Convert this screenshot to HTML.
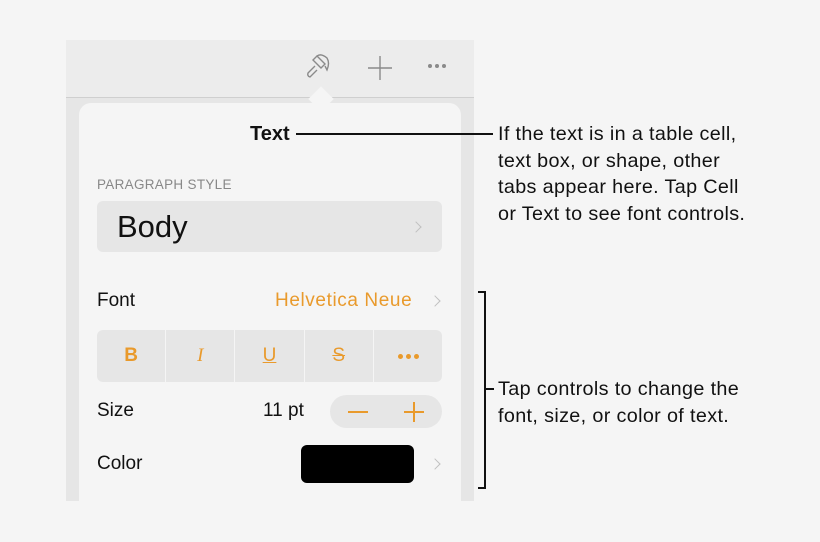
<!DOCTYPE html>
<html><head><style>
body{margin:0;width:820px;height:542px;background:#f5f5f5;font-family:"Liberation Sans",sans-serif;position:relative;overflow:hidden}
.a{position:absolute}
.t{font-size:19.8px;letter-spacing:0.35px;color:#111;line-height:26.5px}
.r{font-size:19px;color:#111}
.chev{position:absolute;width:7px;height:7px;border-right:1.5px solid #c0c0c0;border-top:1.5px solid #c0c0c0;transform:rotate(45deg)}
</style></head><body>
<div class="a" style="left:66px;top:40px;width:408px;height:461px;background:#e6e6e6"></div>
<div class="a" style="left:66px;top:40px;width:408px;height:57px;background:#ececec;border-bottom:1px solid #cfcfcf"></div>
<svg class="a" style="left:305px;top:52px" width="30" height="28" viewBox="0 0 30 28" fill="none" stroke="#8a8a8a" stroke-width="1.4"><path d="M12 4 L20 12 L16 16 L8 8 Z"/><path d="M12 4 Q16 1 22 6 Q25 11 22 18 L20 14"/><path d="M10 14 L3 21 Q2 24 5 25 L12 18"/></svg>
<svg class="a" style="left:366px;top:54px" width="28" height="28" stroke="#8a8a8a" stroke-width="1.4"><path d="M14 2V26M2 14H26"/></svg>
<div class="a" style="left:428px;top:64px;width:4px;height:4px;border-radius:2px;background:#8a8a8a;box-shadow:7px 0 #8a8a8a,14px 0 #8a8a8a"></div>
<div class="a" style="left:79px;top:103px;width:382px;height:398px;background:#f5f5f5;border-radius:12px 12px 0 0"></div>
<div class="a" style="left:312px;top:90px;width:18px;height:18px;background:#f5f5f5;transform:rotate(45deg)"></div>
<div class="a" style="left:250px;top:123px;font-size:20px;font-weight:bold;color:#111">Text</div>
<div class="a" style="left:296px;top:133px;width:197px;height:2px;background:#111"></div>
<div class="a t" style="left:498px;top:121px">If the text is in a table cell,<br>text box, or shape, other<br>tabs appear here. Tap Cell<br>or Text to see font controls.</div>
<div class="a" style="left:97px;top:177px;font-size:13.5px;color:#888;letter-spacing:0.3px">PARAGRAPH STYLE</div>
<div class="a" style="left:97px;top:201px;width:345px;height:51px;background:#e6e6e6;border-radius:6px"></div>
<div class="a" style="left:117px;top:209px;font-size:31px;color:#111">Body</div>
<div class="chev" style="left:412px;top:223px"></div>
<div class="a r" style="left:97px;top:290px">Font</div>
<div class="a r" style="left:275px;top:290px;color:#e99a2c;letter-spacing:0.6px">Helvetica Neue</div>
<div class="chev" style="left:431px;top:297px"></div>
<div class="a" style="left:97px;top:330px;width:345px;height:52px;background:#e6e6e6;border-radius:6px;display:flex;color:#e99a2c;font-size:19px">
<div style="flex:1;text-align:center;line-height:52px;font-weight:bold;border-right:1px solid #f5f5f5">B</div>
<div style="flex:1;text-align:center;line-height:52px;font-style:italic;font-family:'Liberation Serif',serif;border-right:1px solid #f5f5f5">I</div>
<div style="flex:1;text-align:center;line-height:52px;border-right:1px solid #f5f5f5;text-decoration:underline">U</div>
<div style="flex:1;text-align:center;line-height:52px;border-right:1px solid #f5f5f5;text-decoration:line-through">S</div>
<div style="flex:1;position:relative"><div style="position:absolute;left:24px;top:24px;width:5px;height:5px;border-radius:3px;background:#e99a2c;box-shadow:8px 0 #e99a2c,16px 0 #e99a2c"></div></div>
</div>
<div class="a r" style="left:97px;top:400px">Size</div>
<div class="a r" style="left:263px;top:400px">11 pt</div>
<div class="a" style="left:330px;top:395px;width:112px;height:33px;background:#e6e6e6;border-radius:17px"></div>
<div class="a" style="left:348px;top:411px;width:20px;height:2px;background:#e99a2c"></div>
<div class="a" style="left:404px;top:411px;width:20px;height:2px;background:#e99a2c"></div>
<div class="a" style="left:413px;top:402px;width:2px;height:20px;background:#e99a2c"></div>
<div class="a r" style="left:97px;top:453px">Color</div>
<div class="a" style="left:301px;top:445px;width:113px;height:38px;background:#000;border-radius:6px"></div>
<div class="chev" style="left:431px;top:460px"></div>
<div class="a" style="left:478px;top:291px;width:6px;height:194px;border:2px solid #111;border-left:none"></div>
<div class="a" style="left:486px;top:388px;width:8px;height:2px;background:#111"></div>
<div class="a t" style="left:498px;top:376px">Tap controls to change the<br>font, size, or color of text.</div>
</body></html>
